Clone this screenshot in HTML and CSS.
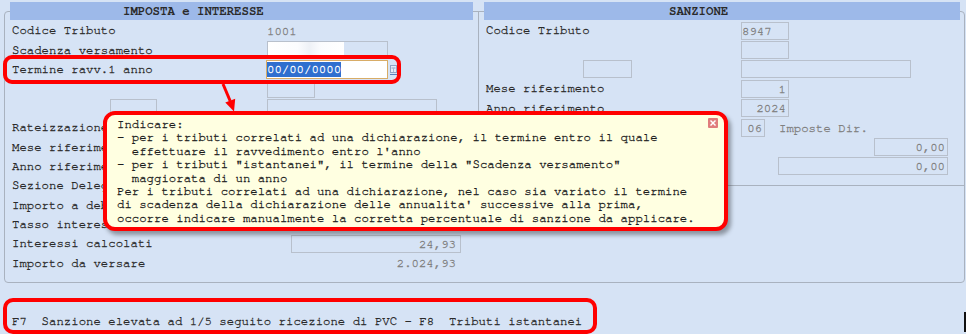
FILE: index.html
```html
<!DOCTYPE html>
<html lang="it">
<head>
<meta charset="utf-8">
<title>Ravvedimento</title>
<link rel="stylesheet" href="styles.css">
</head>
<body>
<div class="page">
  <div class="frame">
    <section class="col col-left">
      <div class="legend legend-left">IMPOSTA e INTERESSE</div>
      <div class="row"><span class="lbl">Codice Tributo</span><span class="val">1001</span></div>
      <div class="row"><span class="lbl">Scadenza versamento</span><span class="box w121"><span class="redact"></span></span></div>
      <div class="row"><span class="lbl">Termine ravv.1 anno</span><span class="date"><span class="sel">00/00/0000</span></span><svg class="cal" width="7" height="10" viewBox="0 0 7 10"><rect x="0.5" y="0.5" width="6" height="7" fill="#e6ecf7" stroke="#8fa2c4"/><line x1="1.5" y1="3" x2="5.5" y2="3" stroke="#8fa2c4"/><line x1="3.5" y1="3" x2="3.5" y2="7" stroke="#a9b8d2"/><line x1="0" y1="9.5" x2="7" y2="9.5" stroke="#5a7dba"/></svg></div>
      <div class="row"><span class="lbl"></span><span class="box w48"></span></div>
      <div class="row"><span class="box w47 ml98"></span><span class="box w170 ml110"></span></div>
      <div class="row"><span class="lbl">Rateizzazione</span></div>
      <div class="row"><span class="lbl">Mese riferimento</span></div>
      <div class="row"><span class="lbl">Anno riferimento</span></div>
      <div class="row"><span class="lbl">Sezione Delega</span></div>
      <div class="row"><span class="lbl">Importo a debito</span></div>
      <div class="row"><span class="lbl">Tasso interessi</span></div>
      <div class="row"><span class="lbl">Interessi calcolati</span><span class="box w170 ml24 r">24,93</span></div>
      <div class="row"><span class="lbl">Importo da versare</span><span class="box w170 ml24 r plain">2.024,93</span></div>
    </section>
    <section class="col col-right">
      <div class="legend legend-right">SANZIONE</div>
      <div class="row"><span class="lbl">Codice Tributo</span><span class="box w48 l">8947</span></div>
      <div class="row"><span class="lbl"></span><span class="box w48"></span></div>
      <div class="row"><span class="box w49 ml97"></span><span class="box w170 ml109"></span></div>
      <div class="row"><span class="lbl">Mese riferimento</span><span class="box w48 r">1</span></div>
      <div class="row"><span class="lbl">Anno riferimento</span><span class="box w48 r">2024</span></div>
      <div class="row"><span class="lbl"></span><span class="box w24 r">06</span><span class="val ml14">Imposte Dir.</span></div>
      <div class="row"><span class="box w74 ml388 r">0,00</span></div>
      <div class="row"><span class="box w170 ml292 r">0,00</span></div>
    </section>
  </div>

  <div class="hint">F7  Sanzione elevata ad 1/5 seguito ricezione di PVC - F8  Tributi istantanei</div>

  <div class="mark"></div>
  <svg class="arrow" width="30" height="35" viewBox="0 0 30 35">
    <line x1="8" y1="4" x2="15.2" y2="21" stroke="#ff0000" stroke-width="3"/>
    <polygon points="19,31.5 20.2,18.8 10.3,22.4" fill="#ff0000"/>
  </svg>

  <div class="tooltip">Indicare:
- per i tributi correlati ad una dichiarazione, il termine entro il quale
  effettuare il ravvedimento entro l'anno
- per i tributi "istantanei", il termine della "Scadenza versamento"
  maggiorata di un anno
Per i tributi correlati ad una dichiarazione, nel caso sia variato il termine
di scadenza della dichiarazione delle annualita' successive alla prima,
occorre indicare manualmente la corretta percentuale di sanzione da applicare.<span class="close"><svg width="10" height="10" viewBox="0 0 10 10"><line x1="2.5" y1="2.5" x2="7.5" y2="7.5" stroke="#fff" stroke-width="1.4"/><line x1="7.5" y1="2.5" x2="2.5" y2="7.5" stroke="#fff" stroke-width="1.4"/></svg></span></div>

  <div class="edge"></div>
</div>
</body>
</html>
```

FILE: styles.css
```css
html, body {
  margin: 0;
  padding: 0;
  overflow: hidden;
}

body {
  background: #d6e3f5;
  font-family: "Nimbus Mono PS", "Nimbus Mono L", "FreeMono", "Courier New", "Liberation Mono", monospace;
  font-size: 12.35px;
  color: #2a2a2a;
  -webkit-text-stroke: 0.3px currentColor;
}

.page {
  position: relative;
  display: flow-root;
  width: 966px;
  height: 334px;
}

.frame {
  display: flex;
  align-items: flex-start;
  box-sizing: border-box;
  width: 961px;
  height: 272px;
  margin: 11px 0 0 4px;
  border: 1px solid #a9b2bf;
  border-radius: 4px;
}

.col {
  box-sizing: border-box;
}

.col-left {
  width: 473px;
}

.col-right {
  width: 486px;
  height: 174px;
  border-left: 1px solid #a9b2bf;
  border-bottom: 1px solid #a9b2bf;
}

.legend {
  box-sizing: border-box;
  height: 18px;
  margin: -10px 0 0 5px;
  line-height: 18px;
  background: #9db9e9;
  font-weight: bold;
  color: #2a2a2a;
  -webkit-text-stroke: 0;
  white-space: pre;
}

.legend-left {
  width: 463px;
  padding-left: 113px;
}

.legend-right {
  width: 476px;
  padding-left: 185px;
}

.row {
  display: flex;
  align-items: center;
  height: 19.4px;
  padding-left: 7px;
  padding-top: 1px;
  margin-bottom: -1px;
  white-space: pre;
}

.lbl {
  flex: 0 0 255px;
  line-height: 19px;
}

.val {
  color: #808080;
  line-height: 18px;
}

.box {
  box-sizing: border-box;
  height: 18px;
  border: 1px solid #b8c0cc;
  line-height: 16px;
  color: #808080;
  overflow: hidden;
}

.box.r {
  text-align: right;
  padding-right: 2px;
}

.box.l {
  padding-left: 0;
}

.box.plain {
  border-color: transparent;
}

.col-left .box.r {
  padding-right: 4px;
}

.w24 { width: 24px; }
.w47 { width: 47px; }
.w48 { width: 48px; }
.w49 { width: 49px; }
.w74 { width: 74px; }
.w121 { width: 121px; }
.w170 { width: 170px; }

.ml14 { margin-left: 14px; }
.ml24 { margin-left: 24px; }
.ml97 { margin-left: 97px; }
.ml98 { margin-left: 98px; }
.ml109 { margin-left: 109px; }
.ml110 { margin-left: 110px; }
.ml292 { margin-left: 292px; }
.ml388 { margin-left: 388px; }

.redact {
  display: block;
  width: 77px;
  height: 19px;
  margin: -1px 0 0 -1px;
  background: linear-gradient(90deg, #ffffff 0%, #fbfcfe 40%, #eef1f6 55%, #fbfcfe 70%, #ffffff 100%);
  filter: blur(0.7px);
}

.date {
  box-sizing: border-box;
  width: 122px;
  height: 19px;
  margin-left: -1px;
  padding: 1px 0 0 0;
  border: 1px solid #d8ac66;
  background: #fff;
}

.sel {
  display: inline-block;
  height: 15px;
  line-height: 15px;
  background: #2f6fcf;
  color: #fff;
}

.cal {
  display: block;
  margin: 2px 0 0 2px;
}

.hint {
  box-sizing: border-box;
  width: 594px;
  height: 36px;
  margin: 15px 0 0 3px;
  padding: 10px 0 0 5px;
  border: 4px solid #ff0000;
  border-radius: 10px;
  line-height: 19px;
  white-space: pre;
}

.mark {
  position: absolute;
  left: 3px;
  top: 55px;
  box-sizing: border-box;
  width: 398px;
  height: 29px;
  border: 4px solid #ff0000;
  border-radius: 9px;
}

.arrow {
  position: absolute;
  left: 215px;
  top: 80px;
  z-index: 3;
}

.tooltip {
  position: absolute;
  left: 103px;
  top: 111px;
  z-index: 2;
  box-sizing: border-box;
  width: 625px;
  height: 120px;
  padding: 3px 0 0 10px;
  border: 4px solid #ff0000;
  border-radius: 12px;
  background: #ffffe1;
  box-shadow: 3px 4px 4px rgba(0, 0, 0, 0.35);
  line-height: 13.4px;
  white-space: pre;
  color: #1e1e1e;
}

.close {
  position: absolute;
  top: 3px;
  right: 6px;
  width: 10px;
  height: 10px;
  background: #e07c7c;
  border-radius: 1px;
  line-height: 0;
}

.edge {
  position: absolute;
  left: 964px;
  top: 312px;
  width: 2px;
  height: 20px;
  background: #111;
}
```
